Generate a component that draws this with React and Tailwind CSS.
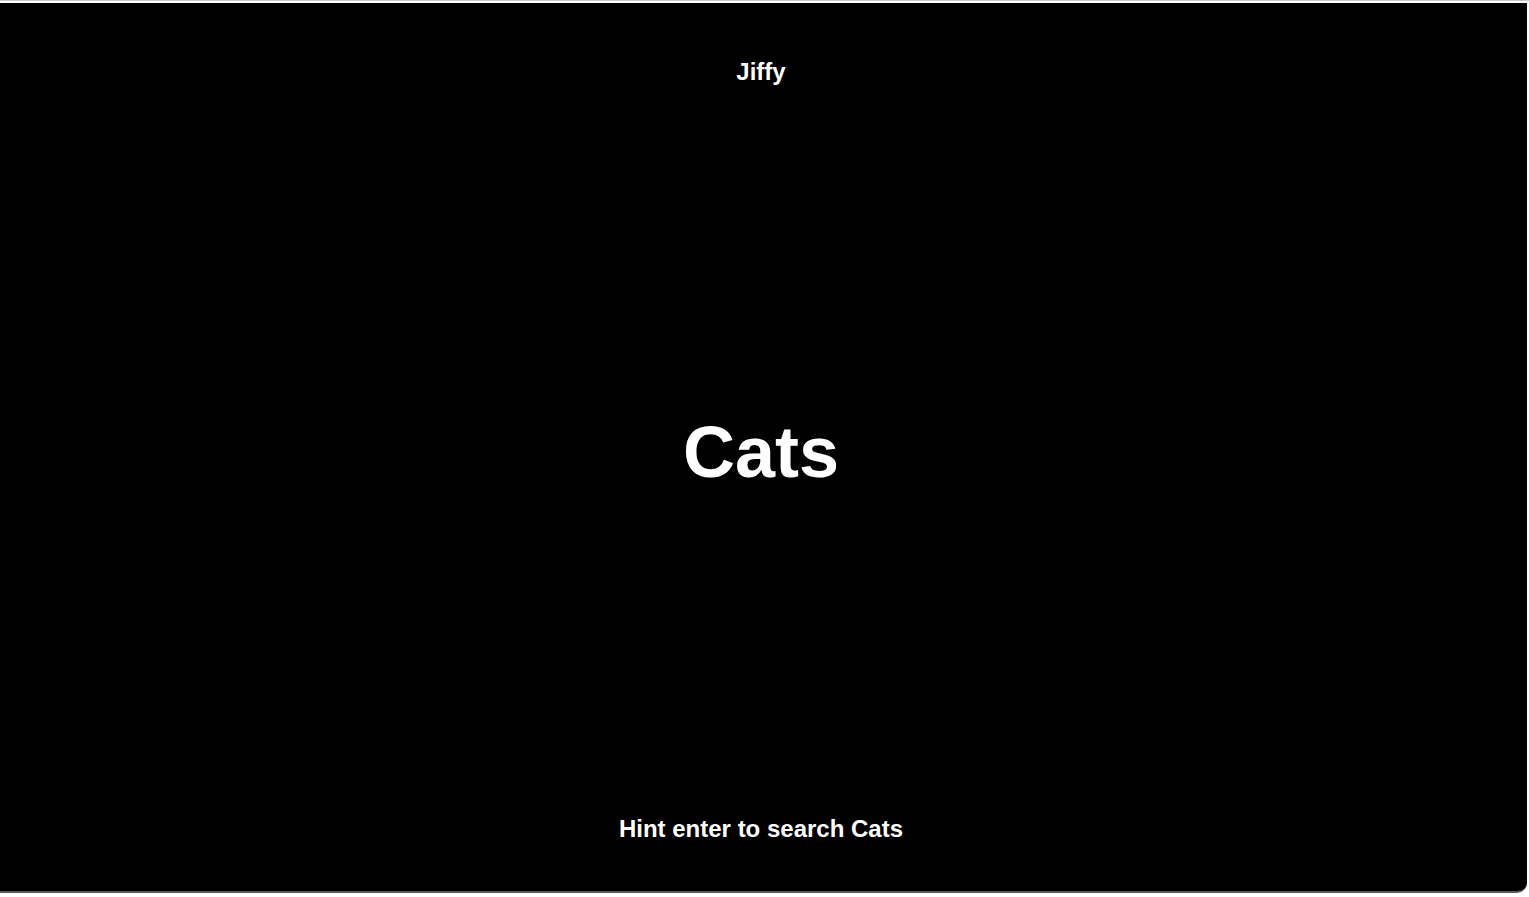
import React from 'react';

function App() {
  return (
    <div className="min-h-screen bg-white pt-[2px] border-t border-[#c8c8c8]" style={{ fontFamily: '"Liberation Sans", Arial, sans-serif' }}>
      <div className="w-[1527px] h-[890px] bg-black border-b-2 border-[#5a5a5a] rounded-br-[10px] pr-[5px] flex flex-col items-center text-white font-bold">
        <h2 className="mt-[55px] text-[24px] leading-[28px]">Jiffy</h2>
        <h1 className="mt-[325px] text-[72px] leading-[83px]">Cats</h1>
        <p className="mt-[321px] text-[24px] leading-[28px]">Hint enter to search Cats</p>
      </div>
    </div>
  );
}

export default App;
